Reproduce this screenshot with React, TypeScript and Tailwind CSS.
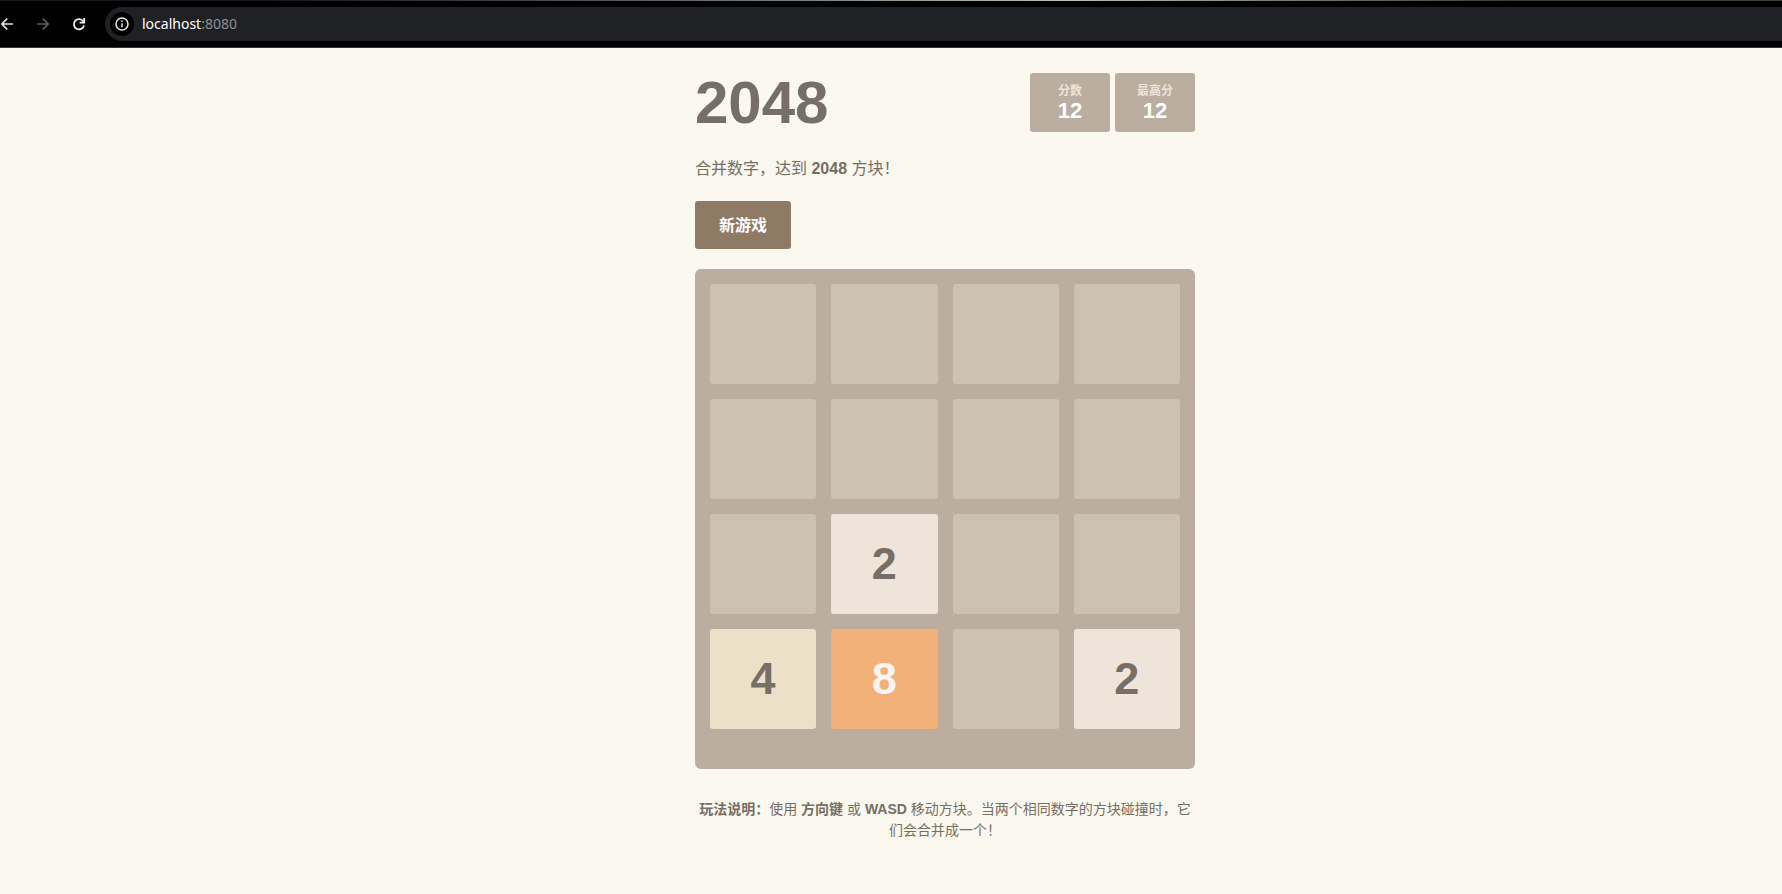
import React, { useState } from "react";

const SIZE = 4;
const START: number[] = [0, 0, 0, 0, 0, 0, 0, 0, 0, 2, 0, 0, 4, 8, 0, 2];

const tileStyles: Record<number, string> = {
  0: "bg-[#cdc1b4]",
  2: "bg-[#eee4da] text-[#776e65]",
  4: "bg-[#ede0c8] text-[#776e65]",
  8: "bg-[#f2b179] text-[#f9f6f2]",
};

function BrowserBar() {
  return (
    <header className="border-b border-[#3c3436] bg-black">
      <div className="h-px bg-linear-to-r from-[#15161a] from-15% via-[#b9c1bd] via-60% to-[#3a3c3a] to-85%" />
      <div className="flex h-[46px] items-center">
        <nav className="flex w-[105px] shrink-0 items-center" aria-label="导航">
          <button type="button" aria-label="后退" className="w-[14px] shrink-0">
            <svg className="size-[14px]" viewBox="0 0 14 14" fill="none" stroke="#e3e3e3" strokeWidth="1.6">
              <path d="M13 7H2.2M7.2 1.6 1.8 7l5.4 5.4" />
            </svg>
          </button>
          <button type="button" aria-label="前进" disabled className="ml-[22px] w-[14px] shrink-0">
            <svg className="size-[14px]" viewBox="0 0 14 14" fill="none" stroke="#5c5c5c" strokeWidth="1.6">
              <path d="M1 7h10.8M6.8 1.6 12.2 7l-5.4 5.4" />
            </svg>
          </button>
          <button type="button" aria-label="重新加载" className="ml-[22px] w-[14px] shrink-0">
            <svg className="size-[14px]" viewBox="0 0 14 14" fill="none" stroke="#f1f1f1" strokeWidth="1.8">
              <path d="M11.4 4.6A5.1 5.1 0 1 0 12 8.4" />
              <path d="M12.2 1v4.6H7.6" />
            </svg>
          </button>
        </nav>
        <div className="flex h-[34px] grow items-center gap-2 rounded-l-full bg-[#202124] pl-[5px]">
          <button
            type="button"
            aria-label="查看网站信息"
            className="flex size-6 shrink-0 items-center justify-center rounded-full bg-black"
          >
            <svg className="size-[14px]" viewBox="0 0 14 14" fill="none" stroke="#e8e8e8" strokeWidth="1.5">
              <circle cx="7" cy="7" r="6" />
              <path d="M7 6.2v4M7 3.6v1.5" />
            </svg>
          </button>
          <span className="font-['Noto_Sans','Open_Sans',sans-serif] text-sm text-[#8c8f93]">
            <span className="text-white">localhost</span>:8080
          </span>
        </div>
      </div>
    </header>
  );
}

function ScoreBox({ label, value }: { label: string; value: number }) {
  return (
    <div className="flex w-20 flex-col items-center rounded-[3px] bg-[#bbada0] pt-[11px] pb-[9px] font-bold">
      <span className="text-xs leading-[15px] text-[#eee4da]">{label}</span>
      <span className="text-[22px] leading-6 text-white">{value}</span>
    </div>
  );
}

export default function App() {
  const [board, setBoard] = useState<number[]>(START);
  const [score, setScore] = useState(12);

  const restart = () => {
    const next: number[] = Array(SIZE * SIZE).fill(0);
    next[5] = 2;
    next[10] = 2;
    setBoard(next);
    setScore(0);
  };

  return (
    <div className="min-h-screen bg-[#faf8ef] font-['Liberation_Sans','Noto_Sans_CJK_SC',sans-serif] text-[#776e65]">
      <BrowserBar />
      <div className="pl-[108px]">
        <main className="mx-auto max-w-[500px] pt-[25px] pb-10">
          <div className="flex items-start justify-between">
            <h1 className="text-[60px] leading-[59px] font-bold">2048</h1>
            <div className="flex gap-[5px]">
              <ScoreBox label="分数" value={score} />
              <ScoreBox label="最高分" value={12} />
            </div>
          </div>
          <p className="mt-[25px] text-base leading-6">
            合并数字，达到 <strong>2048</strong> 方块！
          </p>
          <button
            type="button"
            onClick={restart}
            className="mt-5 block h-12 rounded-[3px] bg-[#8f7a66] px-6 pt-[2px] text-base font-bold text-white"
          >
            新游戏
          </button>
          <div className="mt-5 rounded-md bg-[#bbada0] px-[15px] pt-[15px] pb-10">
            <div className="grid grid-cols-4 gap-[15px]">
              {board.map((value, i) => (
                <div
                  key={i}
                  className={`flex h-[100px] items-center justify-center rounded-[3px] text-[45px] font-bold ${tileStyles[value]}`}
                >
                  {value || ""}
                </div>
              ))}
            </div>
          </div>
          <p className="mt-[30px] text-center text-sm leading-[21px]">
            <strong>玩法说明：</strong>使用 <strong>方向键</strong> 或 <strong>WASD</strong> 移动方块。当两个相同数字的方块碰撞时，它们会合并成一个！
          </p>
        </main>
      </div>
    </div>
  );
}
